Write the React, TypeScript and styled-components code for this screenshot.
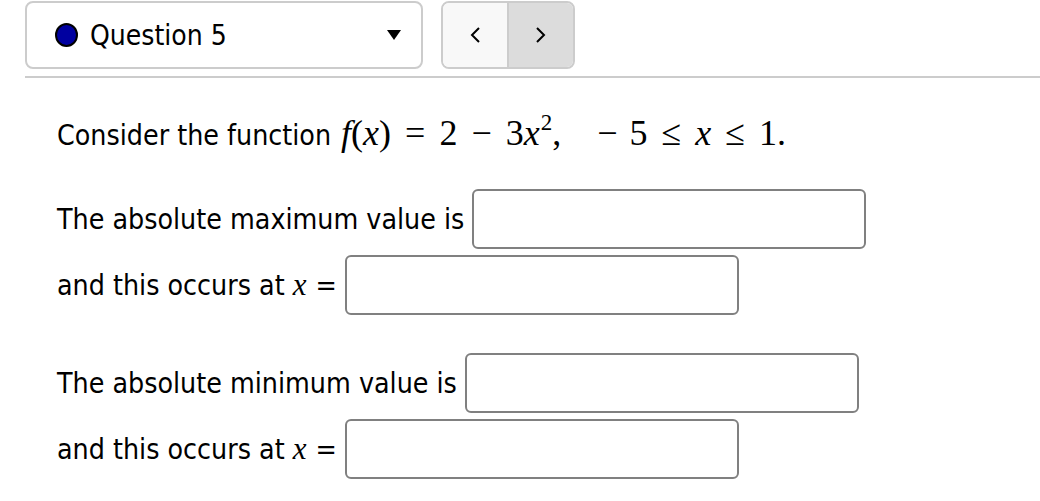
import React from 'react'
import styled, { createGlobalStyle } from 'styled-components'

const GlobalStyle = createGlobalStyle`
  body {
    margin: 0;
    background: #fff;
    color: #000;
    font-family: "DejaVu Sans Condensed", "DejaVu Sans", sans-serif;
  }
`

const Page = styled.div`
  width: 1040px;
  height: 501px;
  overflow: hidden;
`

const Toolbar = styled.div`
  display: flex;
  gap: 18px;
  height: 68px;
  padding: 1px 0 0 25px;
`

const Select = styled.div`
  width: 398px;
  box-sizing: border-box;
  border: 2px solid #ccc;
  border-radius: 8px;
  display: flex;
  align-items: center;
  padding: 0 20px 0 28px;
  font-size: 28px;
`

const Dot = styled.span`
  width: 19px;
  height: 20px;
  border: 2px solid #000;
  border-radius: 50%;
  background: #0000a0;
  margin-right: 12px;
`

const SelectLabel = styled.span`
  flex: 1;
`

const Caret = styled.span`
  width: 0;
  height: 0;
  border-left: 7px solid transparent;
  border-right: 7px solid transparent;
  border-top: 10px solid #000;
`

const Nav = styled.div`
  width: 134px;
  box-sizing: border-box;
  border: 2px solid #ccc;
  border-radius: 8px;
  overflow: hidden;
  display: flex;
`

const NavButton = styled.div<{ $dark?: boolean }>`
  flex: 1;
  display: flex;
  align-items: center;
  justify-content: center;
  background: ${p => (p.$dark ? '#dcdcdc' : '#f8f8f8')};
  & + & {
    border-left: 2px solid #ccc;
  }
`

const Rule = styled.div`
  height: 2px;
  background: #ccc;
  margin: 7px 0 0 25px;
`

const Content = styled.div`
  padding: 35px 0 0 57px;
  font-size: 28.3px;
`

const Prompt = styled.div`
  height: 40px;
  line-height: 40px;
  white-space: nowrap;
`

const Math = styled.span`
  font-family: "Liberation Serif", "DejaVu Serif", serif;
  font-size: 36px;
  margin-left: 10px;
`

const V = styled.i`
  font-style: italic;
`

const Op = styled.span<{ $l?: number; $r?: number }>`
  margin-left: ${p => p.$l ?? 14}px;
  margin-right: ${p => p.$r ?? 14}px;
`

const Sup = styled.span`
  font-size: 23px;
  position: relative;
  top: -15px;
  margin-left: 1px;
`

const Rows = styled.div<{ $top: number }>`
  display: flex;
  flex-direction: column;
  gap: 6px;
  margin-top: ${p => p.$top}px;
`

const Row = styled.div`
  display: flex;
  align-items: center;
  gap: 8px;
`

const Answer = styled.div`
  width: 394px;
  height: 60px;
  box-sizing: border-box;
  border: 2px solid #808080;
  border-radius: 6px;
  background: #fff;
`

const MathX = styled.i`
  font-family: "Liberation Serif", "DejaVu Serif", serif;
  font-size: 31px;
  margin-right: 9px;
`

function Chevron({ dir }: { dir: 'left' | 'right' }) {
  return (
    <svg width="12" height="18" viewBox="0 0 12 18">
      <polyline
        points={dir === 'left' ? '10,2 3,9 10,16' : '2,2 9,9 2,16'}
        fill="none"
        stroke="#000"
        strokeWidth="2"
      />
    </svg>
  )
}

function AnswerPair({ kind, top }: { kind: string; top: number }) {
  return (
    <Rows $top={top}>
      <Row>
        <span>The absolute {kind} value is</span>
        <Answer />
      </Row>
      <Row>
        <span>
          and this occurs at <MathX>x</MathX>=
        </span>
        <Answer />
      </Row>
    </Rows>
  )
}

export default function App() {
  return (
    <Page>
      <GlobalStyle />
      <Toolbar>
        <Select>
          <Dot />
          <SelectLabel>Question 5</SelectLabel>
          <Caret />
        </Select>
        <Nav>
          <NavButton><Chevron dir="left" /></NavButton>
          <NavButton $dark><Chevron dir="right" /></NavButton>
        </Nav>
      </Toolbar>
      <Rule />
      <Content>
        <Prompt>
          Consider the function
          <Math>
            <V>f</V>(<V>x</V>)<Op>=</Op>2<Op>−</Op>3<V>x</V>
            <Sup>2</Sup>,<Op $l={36} $r={12}>−</Op>5<Op>≤</Op>
            <V>x</V>
            <Op>≤</Op>1.
          </Math>
        </Prompt>
        <AnswerPair kind="maximum" top={36} />
        <AnswerPair kind="minimum" top={38} />
      </Content>
    </Page>
  )
}
